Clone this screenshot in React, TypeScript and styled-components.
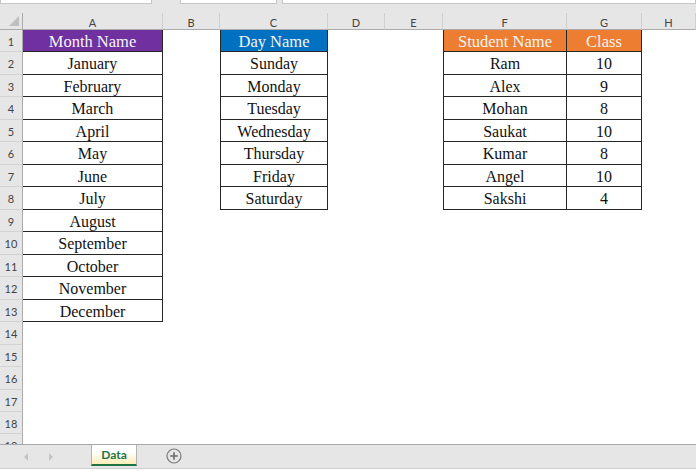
import React from "react";
import styled, { createGlobalStyle } from "styled-components";

const GlobalStyle = createGlobalStyle`
  html, body { margin: 0; padding: 0; background: #ffffff; }
  body { font-family: "Liberation Sans", Arial, sans-serif; overflow: hidden; }
  * { box-sizing: border-box; }
`;

type Kind = "purple" | "blue" | "orange" | "body";

interface CellDef {
  text: string;
  kind: Kind;
  first?: boolean;
}

const COLS = ["A", "B", "C", "D", "E", "F", "G", "H"];
const COL_WIDTHS = [140, 57, 108, 57, 58, 124, 75];
const ROW_COUNT = 19;

const rowEdges = Array.from({ length: ROW_COUNT + 1 }, (_, i) => 30 + Math.round(i * 22.47));
const rowHeights = rowEdges.slice(1).map((e, i) => e - rowEdges[i]);
const GRID_ROWS = `17px ${rowHeights.map((h) => `${h}px`).join(" ")}`;
const GRID_COLS = `23px ${COL_WIDTHS.map((w) => `${w}px`).join(" ")} 1fr`;

const months = ["January", "February", "March", "April", "May", "June", "July", "August", "September", "October", "November", "December"];
const days = ["Sunday", "Monday", "Tuesday", "Wednesday", "Thursday", "Friday", "Saturday"];
const students: [string, string][] = [
  ["Ram", "10"],
  ["Alex", "9"],
  ["Mohan", "8"],
  ["Saukat", "10"],
  ["Kumar", "8"],
  ["Angel", "10"],
  ["Sakshi", "4"],
];

const cells: Record<string, CellDef> = {};
cells["A1"] = { text: "Month Name", kind: "purple" };
months.forEach((m, i) => (cells[`A${i + 2}`] = { text: m, kind: "body" }));
cells["C1"] = { text: "Day Name", kind: "blue", first: true };
days.forEach((d, i) => (cells[`C${i + 2}`] = { text: d, kind: "body", first: true }));
cells["F1"] = { text: "Student Name", kind: "orange", first: true };
cells["G1"] = { text: "Class", kind: "orange" };
students.forEach(([n, c], i) => {
  cells[`F${i + 2}`] = { text: n, kind: "body", first: true };
  cells[`G${i + 2}`] = { text: c, kind: "body" };
});

const FILLS: Record<Kind, string> = {
  purple: "#7030a0",
  blue: "#0070c0",
  orange: "#ed7d31",
  body: "#ffffff",
};

const Page = styled.div`
  width: 100vw;
  height: 100vh;
  display: flex;
  flex-direction: column;
  background: #e6e6e6;
  overflow: hidden;
`;

const TopStrip = styled.div`
  height: 13px;
  flex: none;
  display: flex;
  align-items: flex-start;
  background: #e6e6e6;
`;

const FieldBox = styled.div<{ $w?: number; $ml: number }>`
  height: 4px;
  margin-left: ${(p) => p.$ml}px;
  width: ${(p) => (p.$w ? `${p.$w}px` : "auto")};
  flex: ${(p) => (p.$w ? "none" : "1")};
  background: #ffffff;
  border: 1px solid #c6c6c6;
  border-top: none;
`;

const SheetArea = styled.div`
  flex: 1;
  overflow: hidden;
  background: #ffffff;
`;

const Grid = styled.div<{ $rows: string; $cols: string }>`
  display: grid;
  grid-template-columns: ${(p) => p.$cols};
  grid-template-rows: ${(p) => p.$rows};
`;

const Corner = styled.div`
  position: relative;
  background: #e6e6e6;
  border-right: 1px solid #ababab;
  border-bottom: 1px solid #ababab;
  &::after {
    content: "";
    position: absolute;
    right: 3px;
    bottom: 3px;
    width: 0;
    height: 0;
    border-left: 10px solid transparent;
    border-bottom: 10px solid #bfbfbf;
  }
`;

const ColHead = styled.div`
  background: #e6e6e6;
  border-right: 1px solid #cfcfcf;
  border-bottom: 1px solid #ababab;
  display: flex;
  align-items: center;
  justify-content: center;
  font-family: Lato, "Liberation Sans", sans-serif;
  font-size: 11px;
  color: #444444;
  padding-top: 2px;
`;

const RowHead = styled.div`
  background: #e6e6e6;
  border-right: 1px solid #ababab;
  border-bottom: 1px solid #d2d2d2;
  display: flex;
  align-items: center;
  justify-content: center;
  font-family: Lato, "Liberation Sans", sans-serif;
  font-size: 11px;
  color: #444444;
  padding-top: 1px;
`;

const Cell = styled.div<{ $kind?: Kind; $first?: boolean }>`
  background: ${(p) => (p.$kind ? FILLS[p.$kind] : "#ffffff")};
  ${(p) =>
    p.$kind
      ? `border-right: 1px solid #262626; border-bottom: 1px solid #262626;`
      : ""}
  ${(p) => (p.$kind && p.$first ? `border-left: 1px solid #262626;` : "")}
  display: flex;
  align-items: center;
  justify-content: center;
  white-space: nowrap;
  overflow: hidden;
  font-family: "Liberation Serif", "Times New Roman", serif;
  font-size: ${(p) => (p.$kind && p.$kind !== "body" ? "16.5px" : "16px")};
  padding-top: 2px;
  color: ${(p) => (p.$kind && p.$kind !== "body" ? "#f4f4f4" : "#111111")};
`;

const TabBar = styled.div`
  height: 27px;
  flex: none;
  display: flex;
  align-items: stretch;
  background: #e6e6e6;
  border-top: 1px solid #a8a8a8;
  border-bottom: 2px solid #ffffff;
  box-shadow: inset 0 -1px 0 #cfcfcf;
`;

const NavArrows = styled.div`
  width: 91px;
  flex: none;
  display: flex;
  align-items: center;
  padding-left: 23px;
  gap: 19px;
  color: #c4c4c4;
`;

const SheetTab = styled.div`
  width: 46px;
  height: 21px;
  flex: none;
  display: flex;
  align-items: center;
  justify-content: center;
  background: linear-gradient(#ffffff 35%, #fdeeb8);
  border-left: 1px solid #b4b4b4;
  border-right: 1px solid #b4b4b4;
  border-bottom: 2px solid #217346;
  font-family: Lato, "Liberation Sans", sans-serif;
  font-weight: 700;
  font-size: 12px;
  color: #217346;
`;

const AddSheet = styled.div`
  margin-left: 29px;
  display: flex;
  align-items: center;
  margin-top: -2px;
`;

const Arrow = ({ dir }: { dir: "l" | "r" }) => (
  <svg width="6" height="8" viewBox="0 0 6 8">
    {dir === "l" ? <path d="M5 0 L1 4 L5 8 Z" fill="#c4c4c4" /> : <path d="M1 0 L5 4 L1 8 Z" fill="#c4c4c4" />}
  </svg>
);

const PlusIcon = () => (
  <svg width="16" height="16" viewBox="0 0 16 16">
    <circle cx="8" cy="8" r="7" fill="none" stroke="#7a7a7a" strokeWidth="1.2" />
    <path d="M8 4.2 V11.8 M4.2 8 H11.8" stroke="#6a6a6a" strokeWidth="1.6" />
  </svg>
);

export default function App() {
  const rows = Array.from({ length: ROW_COUNT }, (_, i) => i + 1);
  return (
    <>
      <GlobalStyle />
      <Page>
        <TopStrip>
          <FieldBox $w={152} $ml={0} />
          <FieldBox $w={97} $ml={28} />
          <FieldBox $ml={5} />
        </TopStrip>
        <SheetArea>
          <Grid $rows={GRID_ROWS} $cols={GRID_COLS}>
            <Corner />
            {COLS.map((c) => (
              <ColHead key={c}>{c}</ColHead>
            ))}
            {rows.map((r) => (
              <React.Fragment key={r}>
                <RowHead>{r}</RowHead>
                {COLS.map((c) => {
                  const def = cells[`${c}${r}`];
                  return (
                    <Cell key={c} $kind={def?.kind} $first={def?.first}>
                      {def?.text}
                    </Cell>
                  );
                })}
              </React.Fragment>
            ))}
          </Grid>
        </SheetArea>
        <TabBar>
          <NavArrows>
            <Arrow dir="l" />
            <Arrow dir="r" />
          </NavArrows>
          <SheetTab>Data</SheetTab>
          <AddSheet>
            <PlusIcon />
          </AddSheet>
        </TabBar>
      </Page>
    </>
  );
}
